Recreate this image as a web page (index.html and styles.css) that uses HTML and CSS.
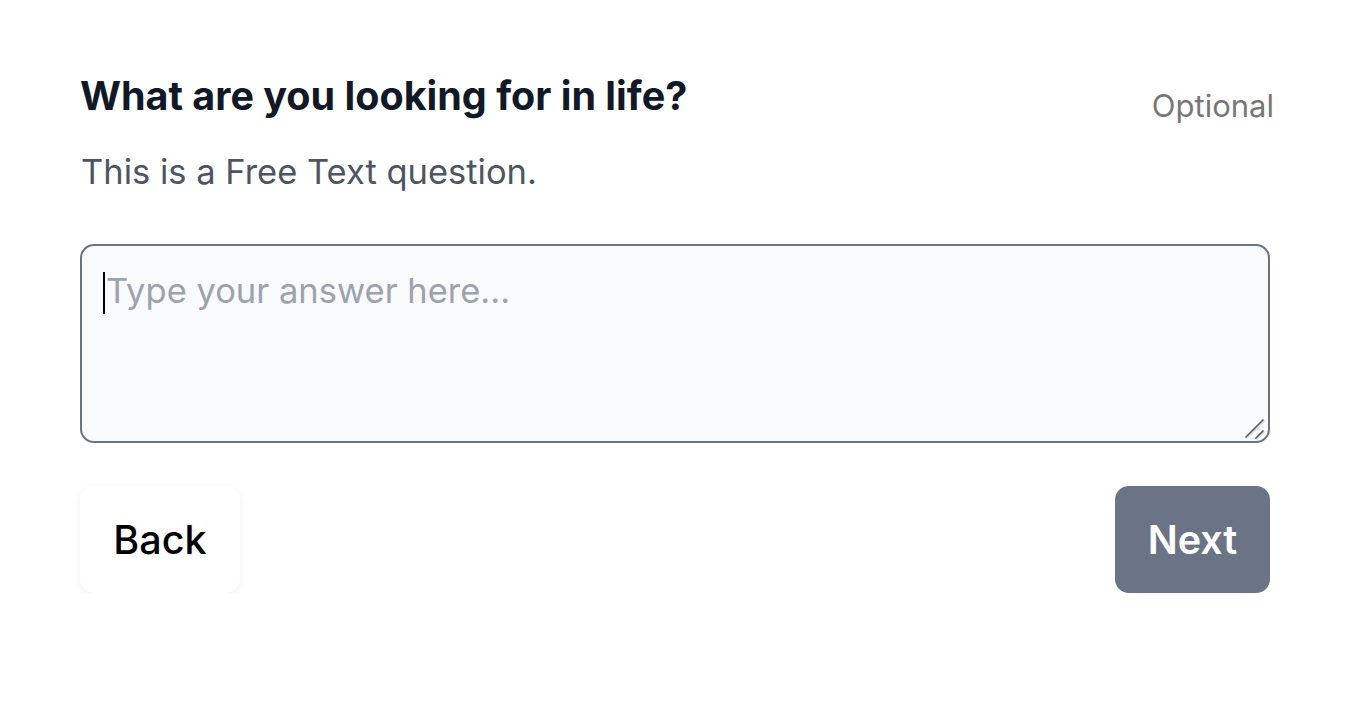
FILE: index.html
```html
<!DOCTYPE html>
<html>
<head>
<meta charset="utf-8">
<link rel="stylesheet" href="styles.css">
</head>
<body>
<div class="wrap">
  <div class="head">
    <h1 class="title">What are you looking for in life?</h1>
    <span class="optional">Optional</span>
  </div>
  <p class="sub">This is a Free Text question.</p>
  <div class="field">
    <textarea class="answer" placeholder="Type your answer here..." autofocus></textarea>
    <span class="caret"></span>
    <svg class="grip" width="24" height="24" viewBox="0 0 24 24"><path d="M2 20 L19 3 M12 21 L19 14" stroke="#5b5b5b" stroke-width="1.7" stroke-linecap="round" fill="none"/><path d="M3 21.5 L20.5 4 M13 22.5 L20.5 15" stroke="#c8c8c8" stroke-width="1" stroke-linecap="round" fill="none"/></svg>
  </div>
  <div class="actions">
    <button class="btn back">Back</button>
    <button class="btn next">Next</button>
  </div>
</div>
</body>
</html>
```
FILE: styles.css
```css
html, body { margin: 0; padding: 0; background: #fff; }
body { font-family: Inter, "Noto Sans", sans-serif; }
.wrap { padding: 70px 98px 0 80px; }
.head { display: flex; justify-content: space-between; align-items: flex-start; }
.title { margin: 0; font-size: 39.5px; font-weight: 700; color: #111827; line-height: 52px; letter-spacing: 0; }
.optional { font-size: 31px; color: #777; margin-top: 18px; line-height: 36px; margin-right: -4px; }
.sub { margin: 25px 0 0 1px; font-size: 34.5px; color: #4b5563; line-height: 46px; }
.field { position: relative; margin-top: 49px; }
.answer { display: block; box-sizing: border-box; width: 100%; height: 199px; border: 2px solid #6b7280; border-radius: 14px; background: #f8fafc; padding: 23px 24px; font-family: Inter, "Noto Sans", sans-serif; font-size: 34.5px; line-height: 44px; color: #111827; outline: none; resize: none; caret-color: #000; }
.answer::placeholder { color: #9ca3af; }
.caret { position: absolute; left: 23px; top: 28px; width: 2px; height: 42px; background: #000; }
.grip { position: absolute; right: 2px; bottom: 2px; }
.actions { display: flex; justify-content: space-between; margin-top: 43px; }
.btn { font-family: Inter, "Noto Sans", sans-serif; font-size: 39.5px; border: none; border-radius: 14px; height: 107px; cursor: pointer; padding: 0; }
.back { width: 160px; background: #fff; color: #000; font-weight: 500; box-shadow: 0 1px 6px rgba(0,0,0,0.06); }
.next { width: 155px; background: #6b7386; color: #fff; font-weight: 600; }
```
